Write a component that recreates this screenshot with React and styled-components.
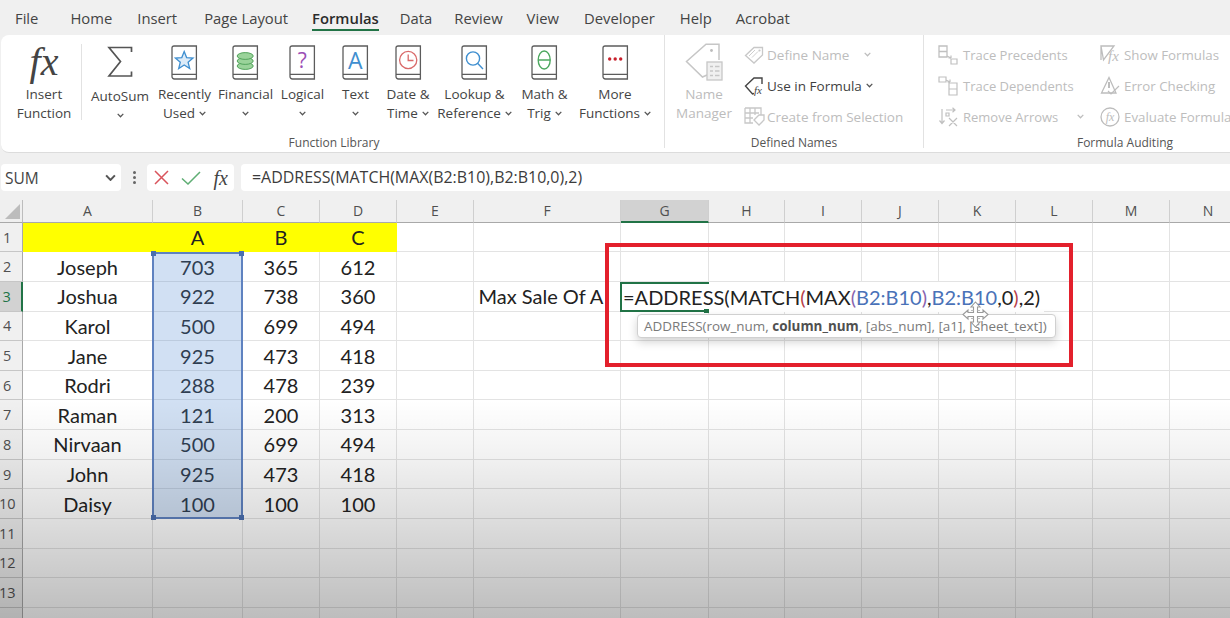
import React from "react";
import styled, { createGlobalStyle } from "styled-components";

const UI_FONT = `"Open Sans", "Noto Sans", sans-serif`;
const CELL_FONT = `Lato, "Liberation Sans", sans-serif`;

const GlobalStyle = createGlobalStyle`
  html, body { margin: 0; padding: 0; width: 1230px; height: 618px; overflow: hidden; background: #f0f0f0; }
  * { box-sizing: border-box; }
`;

/* ================= SHELL ================= */

const Page = styled.div`
  position: relative;
  width: 1230px;
  height: 618px;
  overflow: hidden;
  background: #f0f0f0;
  font-family: ${UI_FONT};
  color: #3a3a3a;
`;

const Dimmer = styled.div`
  position: absolute;
  left: 0;
  right: 0;
  top: 400px;
  bottom: 0;
  pointer-events: none;
  background: linear-gradient(180deg, rgba(0, 0, 0, 0) 0%, rgba(0, 0, 0, 0.05) 25%, rgba(0, 0, 0, 0.26) 100%);
`;

/* ================= TABS ================= */

const TabBar = styled.div`
  display: flex;
  height: 35px;
  align-items: center;
  padding-left: 15px;
  font-size: 14.8px;
`;

const Tab = styled.div`
  position: relative;
  margin-left: ${(p) => p.$gap}px;
  font-weight: ${(p) => (p.$active ? 600 : 400)};
  color: ${(p) => (p.$active ? "#2b2b2b" : "#444")};
  white-space: nowrap;
  ${(p) =>
    p.$active &&
    `&::after {
      content: "";
      position: absolute;
      left: 0;
      right: 0;
      bottom: -3px;
      height: 2px;
      background: #217346;
    }`}
`;

/* ================= RIBBON ================= */

const Ribbon = styled.div`
  display: flex;
  height: 118px;
  margin-left: 1px;
  background: #fff;
  border-radius: 8px 0 0 8px;
  border-bottom: 1px solid #dcdcdc;
  overflow: hidden;
`;

const Group = styled.div`
  position: relative;
  flex: none;
  width: ${(p) => p.$w}px;
  padding-top: 8px;
  display: flex;
  align-items: flex-start;
  ${(p) => p.$line && "border-right: 1px solid #e2e2e2;"}
  margin-bottom: 4px;
`;

const GroupLabel = styled.div`
  position: absolute;
  left: ${(p) => p.$x}px;
  bottom: -3px;
  transform: translateX(-50%);
  font-size: 12px;
  line-height: 16px;
  color: #555;
  white-space: nowrap;
`;

const BigButton = styled.div`
  flex: none;
  width: ${(p) => p.$w}px;
  margin-left: ${(p) => p.$ml || 0}px;
  display: flex;
  flex-direction: column;
  align-items: center;
  font-size: 13.5px;
  line-height: 19px;
  text-align: center;
  color: ${(p) => (p.$off ? "#bcbcbc" : "#444")};
`;

const IconSlot = styled.div`
  height: 36px;
  margin-top: 1px;
  margin-bottom: ${(p) => p.$mb ?? 5}px;
  display: flex;
  align-items: center;
  justify-content: center;
`;

const LabelLine = styled.div`
  display: flex;
  align-items: center;
  justify-content: center;
  gap: 4px;
  height: 19px;
  white-space: nowrap;
`;

const VLine = styled.div`
  flex: none;
  width: 1px;
  height: 76px;
  margin: 1px 0 0 1px;
  background: #e2e2e2;
`;

const FxMark = styled.span`
  font-family: "Liberation Serif", serif;
  font-style: italic;
  font-size: ${(p) => p.$size}px;
  line-height: 1;
  color: #444;
`;

const SmallColumn = styled.div`
  flex: none;
  width: ${(p) => p.$w}px;
  margin-left: ${(p) => p.$ml || 0}px;
  display: flex;
  flex-direction: column;
  gap: 8px;
  font-size: ${(p) => p.$fs || 13}px;
`;

const SmallItem = styled.div`
  display: flex;
  align-items: center;
  height: 23px;
  white-space: nowrap;
  color: ${(p) => (p.$off ? "#bdbdbd" : "#3f3f3f")};
`;

const SmallIcon = styled.span`
  flex: none;
  width: ${(p) => p.$w || 23}px;
  display: flex;
  align-items: center;
`;

const CaretGap = styled.span`
  margin-left: ${(p) => p.$gap}px;
  display: inline-flex;
`;

/* ================= FORMULA BAR ================= */

const FormulaBar = styled.div`
  display: flex;
  align-items: center;
  height: 27px;
  margin-top: 11px;
  padding-left: 1px;
`;

const NameBox = styled.div`
  flex: none;
  width: 120px;
  height: 27px;
  display: flex;
  align-items: center;
  justify-content: space-between;
  padding: 0 5px 0 4px;
  background: #fff;
  border-radius: 4px;
  font-size: 15.5px;
  color: #444;
`;

const Dots = styled.div`
  flex: none;
  width: 26px;
  display: flex;
  flex-direction: column;
  align-items: center;
  gap: 2px;
  span {
    width: 3px;
    height: 3px;
    border-radius: 50%;
    background: #666;
  }
`;

const ActionBox = styled.div`
  flex: none;
  width: 87px;
  height: 27px;
  display: flex;
  align-items: center;
  justify-content: space-between;
  padding: 0 6px 0 7px;
  background: #fff;
  border-radius: 4px;
`;

const FormulaInput = styled.div`
  flex: 1;
  height: 27px;
  margin-left: 7px;
  padding-left: 11px;
  background: #fff;
  border-radius: 4px 0 0 4px;
  font-size: 15.95px;
  line-height: 27px;
  color: #3c3c3c;
`;

/* ================= SHEET ================= */

const COLS = [22.5, 130, 90, 77, 77, 77, 147, 88, 76, 77, 77, 77, 77, 77, 77];
const HEAD_H = 22.7;
const ROW_H = 29.63;

const Sheet = styled.div`
  position: absolute;
  left: 0;
  top: 200px;
  width: 1230px;
  height: 418px;
  overflow: hidden;
  background: #fff;
  display: grid;
  grid-template-columns: ${COLS.map((c) => c + "px").join(" ")};
  grid-auto-rows: ${ROW_H}px;
  grid-template-rows: ${HEAD_H}px;
  font-family: ${CELL_FONT};
`;

const Corner = styled.div`
  background: #efefef;
  border-right: 1px solid #bdbdbd;
  border-bottom: 1px solid #a9a9a9;
  display: flex;
  align-items: flex-end;
  justify-content: flex-end;
  padding: 0 2px 3px 0;
`;

const ColHead = styled.div`
  display: flex;
  align-items: center;
  justify-content: center;
  padding-left: 1px;
  font-family: ${UI_FONT};
  font-size: 14px;
  color: #505050;
  background: ${(p) => (p.$active ? "#d2d2d2" : "#f0f0f0")};
  border-right: 1px solid #cfcfcf;
  border-bottom: ${(p) => (p.$active ? "2px solid #217346" : "1px solid #a9a9a9")};
`;

const RowHead = styled.div`
  display: flex;
  align-items: center;
  justify-content: center;
  padding-right: 7px;
  font-family: ${UI_FONT};
  font-size: 14.5px;
  color: ${(p) => (p.$active ? "#217346" : "#505050")};
  background: ${(p) => (p.$active ? "#d2d2d2" : "#f0f0f0")};
  border-right: ${(p) => (p.$active ? "2px solid #217346" : "1px solid #a9a9a9")};
  border-bottom: 1px solid #c6c6c6;
`;

const Cell = styled.div`
  display: flex;
  align-items: center;
  justify-content: ${(p) => (p.$left ? "flex-start" : "center")};
  padding-left: ${(p) => (p.$left ? 5 : 1)}px;
  font-size: 20px;
  color: #222;
  white-space: nowrap;
  background: ${(p) => (p.$fill ? "#ffff00" : "transparent")};
  border-right: 1px solid ${(p) => (p.$fill ? "#ffff00" : "#e3e3e3")};
  border-bottom: 1px solid ${(p) => (p.$fill ? "#ffff00" : "#e3e3e3")};
`;

const Selection = styled.div`
  position: absolute;
  left: 152px;
  top: ${HEAD_H + ROW_H}px;
  width: 91px;
  height: ${ROW_H * 9}px;
  background: rgba(84, 139, 209, 0.27);
  border: 2px solid #5f82c0;
`;

const Handle = styled.span`
  position: absolute;
  width: 5px;
  height: 5px;
  background: #4a6fb0;
  ${(p) => (p.$top ? "top: -3px;" : "bottom: -3px;")}
  ${(p) => (p.$right ? "right: -3px;" : "left: -3px;")}
`;

const Editor = styled.div`
  position: absolute;
  left: 620px;
  top: ${HEAD_H + ROW_H * 2}px;
  height: ${ROW_H}px;
  width: 424px;
  padding-left: 3px;
  display: flex;
  align-items: center;
  background: #fff;
  font-size: 20px;
  color: #222;
  white-space: nowrap;
  span[data-c="blue"] { color: #4a72b8; }
  span[data-c="purple"] { color: #8a63ae; }
  span[data-c="red"] { color: #b8404a; }
`;

const ActiveBorder = styled.div`
  position: absolute;
  left: 0;
  top: 0;
  bottom: 0;
  width: 89px;
  border: 2px solid #217346;
  border-right: none;
  &::after {
    content: "";
    position: absolute;
    right: 0;
    bottom: -3px;
    width: 5px;
    height: 4px;
    background: #217346;
  }
`;

const FormulaText = styled.span`
  position: relative;
`;

const Tip = styled.div`
  position: absolute;
  left: 637px;
  top: 114px;
  width: 419px;
  height: 24px;
  padding-left: 6px;
  display: flex;
  align-items: center;
  background: #fff;
  border: 1px solid #d0d0d0;
  border-radius: 4px;
  box-shadow: 0 4px 10px rgba(0, 0, 0, 0.18);
  font-family: ${UI_FONT};
  font-size: 13.45px;
  color: #7a7a7a;
  white-space: pre;
  b {
    font-weight: 700;
    color: #505050;
  }
`;

const Cursor = styled.svg`
  position: absolute;
  left: 962px;
  top: 101px;
`;

const RedBox = styled.div`
  position: absolute;
  left: 605px;
  top: 43px;
  width: 468px;
  height: 124px;
  border: 4px solid #e3202c;
`;

/* ================= ICONS ================= */

const Caret = ({ color = "#555", size = 7 }) => (
  <svg width={size} height={size * 0.7} viewBox="0 0 10 7">
    <path d="M1 1.2 5 5.4 9 1.2" fill="none" stroke={color} strokeWidth="1.8" />
  </svg>
);

const Book = ({ children }) => (
  <svg width="27" height="35" viewBox="0 0 27 35">
    <path d="M3 1H25.4V34H3.4C2 34 1 33 1 31.5V3C1 1.8 1.8 1 3 1Z" fill="#fff" stroke="#5c5c5c" strokeWidth="1.3" />
    <path d="M1 29.4H25.4" fill="none" stroke="#5c5c5c" strokeWidth="1.3" />
    {children}
  </svg>
);

const Sigma = () => (
  <svg width="26" height="32" viewBox="0 0 26 32">
    <path d="M24.5 6V1.5H2L13.5 15.5 2 30H24.5V25.5" fill="none" stroke="#555" strokeWidth="1.7" />
  </svg>
);

const bookGlyphs = {
  star: <path d="M13.2 6.5 15.6 12.6 22 13 17.1 17.2 18.7 23.6 13.2 20 7.7 23.6 9.3 17.2 4.4 13 10.8 12.6Z" fill="#dcebf8" stroke="#3f8fd0" strokeWidth="1.3" />,
  coins: (
    <g fill="#9ad39a" stroke="#52a35c" strokeWidth="1">
      <ellipse cx="13.2" cy="21" rx="8" ry="3.4" />
      <ellipse cx="13.2" cy="16" rx="8" ry="3.4" />
      <ellipse cx="13.2" cy="11" rx="8" ry="3.4" />
    </g>
  ),
  question: <text x="13.2" y="23" textAnchor="middle" fontFamily="Open Sans, sans-serif" fontSize="21" fill="#9b4fb5">?</text>,
  letter: <text x="13.2" y="23.5" textAnchor="middle" fontFamily="Open Sans, sans-serif" fontSize="23" fill="#3f8fd0">A</text>,
  clock: (
    <g fill="none" stroke="#d96a6a" strokeWidth="1.3">
      <circle cx="13.2" cy="15" r="8.6" />
      <path d="M13.2 9.5V15.5H18.5" />
    </g>
  ),
  search: (
    <g fill="none" stroke="#3f8fd0" strokeWidth="1.4">
      <circle cx="12" cy="13.5" r="6.6" />
      <path d="M16.8 18.5 22 24" />
    </g>
  ),
  theta: (
    <g fill="none" stroke="#4ea860" strokeWidth="1.4">
      <ellipse cx="13.2" cy="15" rx="6" ry="9" />
      <path d="M7.2 15H19.2" />
    </g>
  ),
  dots: (
    <g fill="#c8202c">
      <circle cx="7.7" cy="14" r="1.7" />
      <circle cx="13.2" cy="14" r="1.7" />
      <circle cx="18.7" cy="14" r="1.7" />
    </g>
  ),
};

const NameTag = () => (
  <svg width="38" height="38" viewBox="0 0 38 38">
    <path d="M22 32 17.5 34 1.5 18.5 21 1.3H34V17" fill="none" stroke="#c6c6c6" strokeWidth="1.5" />
    <circle cx="26.5" cy="7.5" r="1.4" fill="#bcbcbc" />
    <rect x="22" y="19" width="15" height="18" fill="#f0f0f0" stroke="#c6c6c6" strokeWidth="1.3" />
    <path d="M25 23.5H28M30 23.5H34.5M25 28H28M30 28H34.5M25 32.5H28M30 32.5H34.5" stroke="#c6c6c6" strokeWidth="1.3" />
  </svg>
);

const TagSmall = ({ color = "#c8c8c8" }) => (
  <svg width="20" height="18" viewBox="0 0 20 18">
    <path d="M1.5 9.5 10 1.5H18.5V9L10 17Z" fill="none" stroke={color} strokeWidth="1.3" />
    <path d="M11 4 5 10M14 5.5 8 11.5" fill="none" stroke={color} strokeWidth="0.9" />
    <circle cx="15.5" cy="4.5" r="1.1" fill={color} />
  </svg>
);

const TagFx = () => (
  <svg width="21" height="20" viewBox="0 0 21 20">
    <path d="M10 17.5 8.5 18 1.5 10 10 2H18V8" fill="none" stroke="#444" strokeWidth="1.4" />
    <text x="10" y="18" fontFamily="Liberation Serif, serif" fontStyle="italic" fontSize="11" fill="#444">fx</text>
  </svg>
);

const TableTag = () => (
  <svg width="21" height="19" viewBox="0 0 21 19">
    <path d="M1 1H17V8M1 1V16H9M1 6H15M1 11H9M6 1V16M11 1V8" fill="none" stroke="#c8c8c8" strokeWidth="1.3" />
    <path d="M10 13 15 8H20V13L15 18Z" fill="#fff" stroke="#c8c8c8" strokeWidth="1.3" />
  </svg>
);

const Precedents = () => (
  <svg width="20" height="20" viewBox="0 0 20 20">
    <path d="M1 1H9V12H1ZM1 6.5H9" fill="none" stroke="#c0c0c0" strokeWidth="1.3" />
    <path d="M13 14H19V19H13ZM9 11 13 13M13 13V10.5M13 13H10.5" fill="none" stroke="#c0c0c0" strokeWidth="1.2" />
  </svg>
);

const Dependents = () => (
  <svg width="20" height="20" viewBox="0 0 20 20">
    <path d="M1 1H8V6H1ZM11 7H19V19H11ZM11 13H19M8 4 12 6M12 6V3.5M12 6H9.5" fill="none" stroke="#c0c0c0" strokeWidth="1.2" />
  </svg>
);

const RemoveArrows = () => (
  <svg width="20" height="20" viewBox="0 0 20 20">
    <path d="M4 2V16M1.5 13.5 4 16.5 6.5 13.5M8 3H17M14.5 .8 17 3 14.5 5.2M11 11 19 19M19 11 11 19M8 6H11V9H8Z" fill="none" stroke="#c0c0c0" strokeWidth="1.2" />
  </svg>
);

const ShowFormulas = () => (
  <svg width="21" height="20" viewBox="0 0 21 20">
    <path d="M1 1H14L3.5 15Z M1 1V15" fill="none" stroke="#bdbdbd" strokeWidth="1.3" />
    <text x="8" y="16" fontFamily="Liberation Serif, serif" fontStyle="italic" fontSize="15" fill="#bdbdbd">fx</text>
  </svg>
);

const ErrorCheck = () => (
  <svg width="20" height="20" viewBox="0 0 20 20">
    <path d="M9 1.5 16 17H1.5Z" fill="none" stroke="#bdbdbd" strokeWidth="1.3" />
    <path d="M9 6V12" stroke="#bdbdbd" strokeWidth="2" />
    <path d="M8 15 11 18 19 10" fill="none" stroke="#bdbdbd" strokeWidth="1.2" />
  </svg>
);

const EvalFx = () => (
  <svg width="20" height="20" viewBox="0 0 20 20">
    <circle cx="10" cy="10" r="9" fill="none" stroke="#bdbdbd" strokeWidth="1.3" />
    <text x="10" y="14" textAnchor="middle" fontFamily="Liberation Serif, serif" fontStyle="italic" fontSize="12" fill="#bdbdbd">fx</text>
  </svg>
);

/* ================= DATA ================= */

const tabs = [
  ["File", 0], ["Home", 32], ["Insert", 25], ["Page Layout", 27], ["Formulas", 24],
  ["Data", 21], ["Review", 22], ["View", 24], ["Developer", 25], ["Help", 25], ["Acrobat", 24],
];

const library = [
  { w: 66, ml: 5, mb: 7, icon: <Sigma />, lines: ["AutoSum"], caretLine: true },
  { w: 63, glyph: "star", lines: ["Recently", "Used"] },
  { w: 59, glyph: "coins", lines: ["Financial"], caretLine: true },
  { w: 55, glyph: "question", lines: ["Logical"], caretLine: true },
  { w: 51, glyph: "letter", lines: ["Text"], caretLine: true },
  { w: 54, glyph: "clock", lines: ["Date &", "Time"] },
  { w: 79, glyph: "search", lines: ["Lookup &", "Reference"] },
  { w: 61, glyph: "theta", lines: ["Math &", "Trig"] },
  { w: 80, glyph: "dots", lines: ["More", "Functions"] },
];

const rows = [
  ["", "A", "B", "C"],
  ["Joseph", 703, 365, 612],
  ["Joshua", 922, 738, 360],
  ["Karol", 500, 699, 494],
  ["Jane", 925, 473, 418],
  ["Rodri", 288, 478, 239],
  ["Raman", 121, 200, 313],
  ["Nirvaan", 500, 699, 494],
  ["John", 925, 473, 418],
  ["Daisy", 100, 100, 100],
  ["", "", "", ""],
  ["", "", "", ""],
  ["", "", "", ""],
  ["", "", "", ""],
];

const colNames = ["A", "B", "C", "D", "E", "F", "G", "H", "I", "J", "K", "L", "M", "N"];

export default function App() {
  return (
    <Page>
      <GlobalStyle />

      <TabBar>
        {tabs.map(([name, gap]) => (
          <Tab key={name} $gap={gap} $active={name === "Formulas"}>{name}</Tab>
        ))}
      </TabBar>

      <Ribbon>
        <Group $w={664} $line>
          <BigButton $w={72} $ml={7}>
            <IconSlot><FxMark $size={40}>fx</FxMark></IconSlot>
            <LabelLine>Insert</LabelLine>
            <LabelLine>Function</LabelLine>
          </BigButton>
          <VLine />
          {library.map((b) => (
            <BigButton key={b.lines[0]} $w={b.w} $ml={b.ml}>
              <IconSlot $mb={b.mb}>{b.icon || <Book>{bookGlyphs[b.glyph]}</Book>}</IconSlot>
              {b.lines.map((line, i) => (
                <LabelLine key={line}>
                  {line}
                  {!b.caretLine && i === b.lines.length - 1 && <Caret />}
                </LabelLine>
              ))}
              {b.caretLine && <LabelLine><Caret /></LabelLine>}
            </BigButton>
          ))}
          <GroupLabel $x={333}>Function Library</GroupLabel>
        </Group>

        <Group $w={259} $line>
          <BigButton $w={78} $off>
            <IconSlot><NameTag /></IconSlot>
            <LabelLine>Name</LabelLine>
            <LabelLine>Manager</LabelLine>
          </BigButton>
          <SmallColumn $w={170} $fs={13.5} $ml={1}>
            <SmallItem $off>
              <SmallIcon><TagSmall /></SmallIcon>Define Name
              <CaretGap $gap={15}><Caret color="#bdbdbd" /></CaretGap>
            </SmallItem>
            <SmallItem>
              <SmallIcon><TagFx /></SmallIcon>Use in Formula
              <CaretGap $gap={4}><Caret /></CaretGap>
            </SmallItem>
            <SmallItem $off>
              <SmallIcon><TableTag /></SmallIcon>Create from Selection
            </SmallItem>
          </SmallColumn>
          <GroupLabel $x={129}>Defined Names</GroupLabel>
        </Group>

        <Group $w={320}>
          <SmallColumn $w={162} $ml={14}>
            <SmallItem $off><SmallIcon $w={25}><Precedents /></SmallIcon>Trace Precedents</SmallItem>
            <SmallItem $off><SmallIcon $w={25}><Dependents /></SmallIcon>Trace Dependents</SmallItem>
            <SmallItem $off>
              <SmallIcon $w={25}><RemoveArrows /></SmallIcon>Remove Arrows
              <CaretGap $gap={19}><Caret color="#bdbdbd" /></CaretGap>
            </SmallItem>
          </SmallColumn>
          <SmallColumn $w={150} $fs={13.3}>
            <SmallItem $off><SmallIcon $w={24}><ShowFormulas /></SmallIcon>Show Formulas</SmallItem>
            <SmallItem $off><SmallIcon $w={24}><ErrorCheck /></SmallIcon>Error Checking</SmallItem>
            <SmallItem $off><SmallIcon $w={24}><EvalFx /></SmallIcon>Evaluate Formula</SmallItem>
          </SmallColumn>
          <GroupLabel $x={201}>Formula Auditing</GroupLabel>
        </Group>
      </Ribbon>

      <FormulaBar>
        <NameBox>
          SUM
          <Caret color="#555" size={11} />
        </NameBox>
        <Dots><span /><span /><span /></Dots>
        <ActionBox>
          <svg width="15" height="15" viewBox="0 0 15 15">
            <path d="M1 1 14 14M14 1 1 14" stroke="#d9545c" strokeWidth="1.5" />
          </svg>
          <svg width="20" height="14" viewBox="0 0 20 14">
            <path d="M1 7.5 7 13 19 1" fill="none" stroke="#5fae74" strokeWidth="1.5" />
          </svg>
          <FxMark $size={20}>fx</FxMark>
        </ActionBox>
        <FormulaInput>=ADDRESS(MATCH(MAX(B2:B10),B2:B10,0),2)</FormulaInput>
      </FormulaBar>

      <Sheet>
        <Corner>
          <svg width="15" height="15" viewBox="0 0 15 15">
            <path d="M15 0V15H0Z" fill="#bcbcbc" />
          </svg>
        </Corner>
        {colNames.map((c) => (
          <ColHead key={c} $active={c === "G"}>{c}</ColHead>
        ))}

        {rows.map((row, r) => (
          <React.Fragment key={r}>
            <RowHead $active={r === 2}>{r < 13 ? r + 1 : ""}</RowHead>
            {colNames.map((c, i) => (
              <Cell key={c} $fill={r === 0 && i < 4} $left={r === 2 && c === "F"}>
                {i < 4 ? row[i] : r === 2 && c === "F" ? "Max Sale Of A" : ""}
              </Cell>
            ))}
          </React.Fragment>
        ))}

        <Selection>
          <Handle $top />
          <Handle $top $right />
          <Handle />
          <Handle $right />
        </Selection>

        <Editor>
          <ActiveBorder />
          <FormulaText>
            =ADDRESS(MATCH<span data-c="red">(</span>MAX<span data-c="purple">(</span>
            <span data-c="blue">B2:B10</span><span data-c="purple">)</span>,
            <span data-c="blue">B2:B10</span>,0<span data-c="red">)</span>,2)
          </FormulaText>
        </Editor>

        <Tip>
          ADDRESS(row_num, <b>column_num</b>, [abs_num], [a1], [sheet_text])
        </Tip>

        <Cursor width="27" height="27" viewBox="0 0 27 27">
          <path
            d="M13.5 1 18 6H15.5V11.5H21V9L26 13.5 21 18V15.5H15.5V21H18L13.5 26 9 21H11.5V15.5H6V18L1 13.5 6 9V11.5H11.5V6H9Z"
            fill="#fff"
            stroke="#9a9a9a"
            strokeWidth="1.1"
          />
          <path d="M9 9.5H11.5M15.5 9.5H18M9 17.5H11.5M15.5 17.5H18" stroke="#bbb" strokeWidth="1" />
        </Cursor>

        <RedBox />
      </Sheet>

      <Dimmer />
    </Page>
  );
}
